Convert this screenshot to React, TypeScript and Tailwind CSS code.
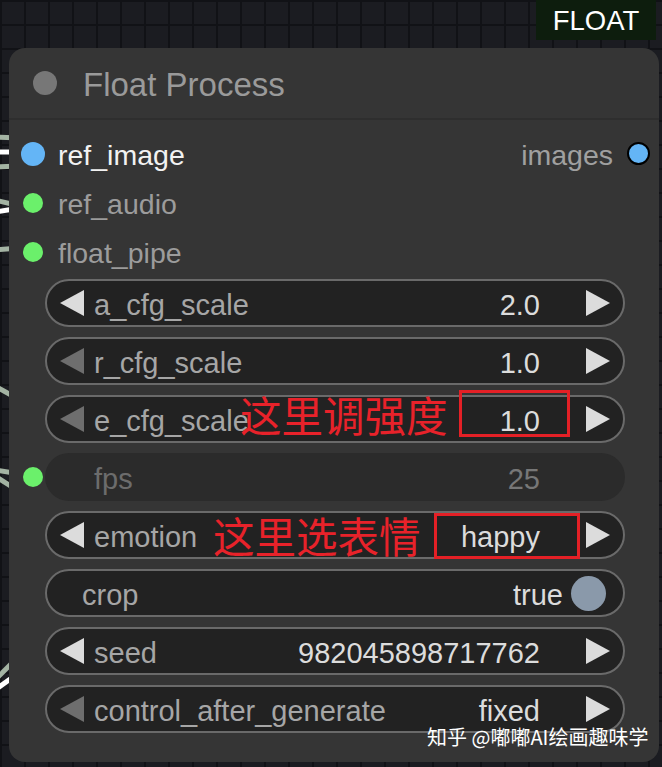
import type { ReactNode } from 'react';

const font = { fontFamily: '"Liberation Sans", Arial, "Noto Sans CJK SC", sans-serif' };
const cjk = { fontFamily: '"Noto Sans CJK SC", sans-serif' };

function LeftArrow({ dim }: { dim?: boolean }) {
    return (
        <svg width="24" height="26" viewBox="0 0 24 26" className="shrink-0">
            <polygon points="0,13 24,0 24,26" fill={dim ? '#6e6e6e' : '#dcdcdc'} />
        </svg>
    );
}

function RightArrow() {
    return (
        <svg width="24" height="26" viewBox="0 0 24 26" className="shrink-0">
            <polygon points="24,13 0,0 0,26" fill="#dcdcdc" />
        </svg>
    );
}

function Row({ dot, children }: { dot?: ReactNode; children: ReactNode }) {
    return (
        <div className="flex items-center h-[48px]">
            <div className="w-[36px] shrink-0 flex justify-center pl-[12px] pr-[0px]">
                <div className="w-[24px] flex justify-center">{dot}</div>
            </div>
            {children}
        </div>
    );
}

function NumberWidget({ label, value, dim }: { label: string; value: string; dim?: boolean }) {
    return (
        <Row>
            <div className="flex-1 h-full mr-[34px] rounded-full border-2 border-[#6a6a6a] bg-[#222222] flex items-center px-[13px]">
                <LeftArrow dim={dim} />
                <span className="ml-[10px] pt-[4px] text-[#a6a6a6] text-[29px] leading-none">{label}</span>
                <span className="flex-1 pt-[4px] text-right text-[#dcdcdc] text-[29px] leading-none">{value}</span>
                <div className="ml-[46px]">
                    <RightArrow />
                </div>
            </div>
        </Row>
    );
}

function InputSlot({ color, label, bright, big }: { color: string; label: string; bright?: boolean; big?: boolean }) {
    return (
        <div className="flex items-center h-[49px] pl-[12px]">
            <div className="w-[24px] flex justify-center">
                <div className={`${big ? 'w-[24px] h-[24px]' : 'w-[20px] h-[20px]'} rounded-full ${color}`} />
            </div>
            <span className={`ml-[13px] pt-[4px] text-[28.5px] leading-none ${bright ? 'text-[#f2f2f2]' : 'text-[#9c9c9c]'}`}>{label}</span>
        </div>
    );
}

export default function App() {
    return (
        <div
            style={font}
            className="relative w-[662px] h-[767px] overflow-hidden bg-[#1b1c21] bg-[linear-gradient(to_right,#111216_2px,transparent_2px),linear-gradient(to_bottom,#111216_2px,transparent_2px)] bg-[size:24px_24px]"
        >
            {/* wires coming in from the left */}
            <svg className="absolute left-0 top-0" width="40" height="767" viewBox="0 0 40 767">
                <g fill="none" strokeWidth="5">
                    <path d="M-5 137 L20 138" stroke="#a3b3a3" />
                    <path d="M-5 152 L20 152" stroke="#ffffff" />
                    <path d="M-5 167 L20 166" stroke="#a3b3a3" />
                    <path d="M-5 200 L20 206" stroke="#a3b3a3" />
                    <path d="M-5 212 L20 208" stroke="#ffffff" />
                    <path d="M-5 250 L20 248" stroke="#a3b3a3" />
                    <path d="M-5 386 L20 400" stroke="#a3b3a3" />
                    <path d="M-5 470 L20 474" stroke="#a3b3a3" />
                    <path d="M-5 476 L20 492" stroke="#a3b3a3" />
                    <path d="M-5 680 L20 655" stroke="#a3b3a3" />
                    <path d="M-5 690 L20 672" stroke="#ffffff" />
                </g>
            </svg>

            <div className="relative flex justify-end h-[48px] pr-[6px]">
                <div className="h-[40px] w-[120px] bg-[#0d1d0d] flex items-center justify-center pt-[2px] text-white text-[27.5px] leading-none">
                    FLOAT
                </div>
            </div>

            <div className="relative ml-[9px] mr-[3px] h-[714px] rounded-[16px] bg-[#353535] overflow-hidden">
                <div className="h-[72px] flex items-center pl-[24px] border-b-2 border-[#2e2e2e]">
                    <div className="w-[24px] h-[24px] rounded-full bg-[#777777]" />
                    <span className="ml-[26px] pt-[3px] text-[33px] leading-none text-[#9a9a9a]">Float Process</span>
                </div>

                <div className="pt-[9px]">
                    <div className="flex items-center justify-between pr-[9px]">
                        <InputSlot color="bg-[#64b5f6]" label="ref_image" bright big />
                        <div className="flex items-center">
                            <span className="pt-[4px] text-[28.5px] leading-none text-[#a0a0a0]">images</span>
                            <div className="ml-[14px] w-[23px] h-[23px] rounded-full bg-[#64b5f6] border-2 border-black" />
                        </div>
                    </div>
                    <InputSlot color="bg-[#6bf06b]" label="ref_audio" />
                    <InputSlot color="bg-[#6bf06b]" label="float_pipe" />
                </div>

                <div className="mt-[3px] flex flex-col gap-[10px]">
                    <NumberWidget label="a_cfg_scale" value="2.0" />
                    <NumberWidget label="r_cfg_scale" value="1.0" dim />
                    <NumberWidget label="e_cfg_scale" value="1.0" dim />
                    <Row dot={<div className="w-[20px] h-[20px] rounded-full bg-[#6bf06b]" />}>
                        <div className="flex-1 h-full mr-[34px] rounded-full bg-[#2b2b2b] flex items-center pl-[49px] pr-[85px]">
                            <span className="pt-[4px] text-[29px] leading-none text-[#6c6c6c]">fps</span>
                            <span className="flex-1 pt-[4px] text-right text-[29px] leading-none text-[#777777]">25</span>
                        </div>
                    </Row>
                    <NumberWidget label="emotion" value="happy" />
                    <Row>
                        <div className="flex-1 h-full mr-[34px] rounded-full border-2 border-[#6a6a6a] bg-[#222222] flex items-center pl-[35px] pr-[17px]">
                            <span className="pt-[4px] text-[#a6a6a6] text-[29px] leading-none">crop</span>
                            <span className="flex-1 pt-[4px] text-right text-[#dcdcdc] text-[29px] leading-none">true</span>
                            <div className="ml-[8px] w-[35px] h-[35px] rounded-full bg-[#8a99aa]" />
                        </div>
                    </Row>
                    <NumberWidget label="seed" value="982045898717762" />
                    <NumberWidget label="control_after_generate" value="fixed" dim />
                </div>
            </div>

            {/* red annotations drawn over the node */}
            <div className="absolute left-[240px] top-[394px] text-[41.5px] leading-none text-[#e8222a]" style={cjk}>
                这里调强度
            </div>
            <div className="absolute left-[459px] top-[390px] w-[111px] h-[47px] border-[3px] border-[#e42026]" />
            <div className="absolute left-[213px] top-[515px] text-[41.5px] leading-none text-[#e8222a]" style={cjk}>
                这里选表情
            </div>
            <div className="absolute left-[434px] top-[513px] w-[146px] h-[46px] border-[3px] border-[#e42026]" />

            <div className="absolute left-[427px] top-[727px] text-[20px] leading-none text-white" style={cjk}>
                知乎 @嘟嘟AI绘画趣味学
            </div>
        </div>
    );
}
